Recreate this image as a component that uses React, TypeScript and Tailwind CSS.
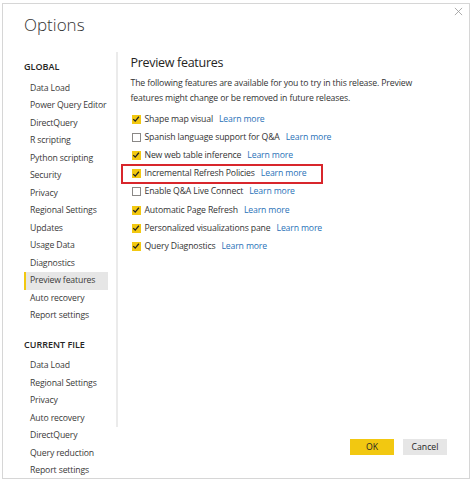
import { useState } from 'react';

type Feature = {
    label: string;
    checked: boolean;
    highlighted?: boolean;
};

const globalItems = [
    'Data Load',
    'Power Query Editor',
    'DirectQuery',
    'R scripting',
    'Python scripting',
    'Security',
    'Privacy',
    'Regional Settings',
    'Updates',
    'Usage Data',
    'Diagnostics',
    'Preview features',
    'Auto recovery',
    'Report settings',
];

const currentFileItems = [
    'Data Load',
    'Regional Settings',
    'Privacy',
    'Auto recovery',
    'DirectQuery',
    'Query reduction',
    'Report settings',
];

const initialFeatures: Feature[] = [
    { label: 'Shape map visual', checked: true },
    { label: 'Spanish language support for Q&A', checked: false },
    { label: 'New web table inference', checked: true },
    { label: 'Incremental Refresh Policies', checked: true, highlighted: true },
    { label: 'Enable Q&A Live Connect', checked: false },
    { label: 'Automatic Page Refresh', checked: true },
    { label: 'Personalized visualizations pane', checked: true },
    { label: 'Query Diagnostics', checked: true },
];

function Checkbox({ checked, onClick }: { checked: boolean; onClick: () => void }) {
    if (checked) {
        return (
            <button onClick={onClick} className="w-[9px] h-[9px] bg-[#f2c811] flex items-center justify-center shrink-0">
                <svg viewBox="0 0 10 10" className="w-[8px] h-[8px]" fill="none">
                    <path d="M1.5 5.2L4 7.6L8.6 2.2" stroke="#252423" strokeWidth={1.6} />
                </svg>
            </button>
        );
    }
    return <button onClick={onClick} className="w-[9px] h-[9px] bg-white border border-[#8a8886] shrink-0" />;
}

export default function App() {
    const [features, setFeatures] = useState(initialFeatures);
    const [selected, setSelected] = useState('global-Preview features');

    const toggle = (index: number) => {
        setFeatures(prev => prev.map((f, i) => (i === index ? { ...f, checked: !f.checked } : f)));
    };

    const renderNavItem = (section: string, item: string) => {
        const key = `${section}-${item}`;
        const isActive = selected === key;
        return (
            <button
                key={key}
                onClick={() => setSelected(key)}
                className={`block w-[84px] h-[17.5px] text-left pl-[4px] leading-[17.5px] whitespace-nowrap border-l-2 ${
                    isActive ? 'bg-[#e6e6e6] border-[#f2c811]' : 'border-transparent'
                }`}
            >
                {item}
            </button>
        );
    };

    return (
        <div className="w-[474px] h-[482px] bg-white pt-[3px] pl-[2px] text-[#333333]" style={{ fontFamily: '"Open Sans", "Noto Sans", sans-serif' }}>
            <div className="w-[468px] h-[476px] border border-[#d6d6d6] flex flex-col">
                {/* Header */}
                <div className="relative h-[48px] shrink-0 pl-[21px] pt-[9px]">
                    <h1 className="text-[17px] font-light leading-[24px] text-[#333333]">Options</h1>
                    <button className="absolute top-[3px] right-[6px] text-[#999999]" aria-label="Close">
                        <svg viewBox="0 0 10 10" className="w-[9px] h-[9px]" fill="none" stroke="currentColor" strokeWidth={0.9}>
                            <path d="M1 1L9 9M9 1L1 9" />
                        </svg>
                    </button>
                </div>

                <div className="flex flex-1">
                    {/* Sidebar */}
                    <div className="w-[113px] shrink-0 pl-[21px] pt-[1.5px] text-[8.7px] tracking-[-0.15px] text-[#3b3a39]">
                        <div className="h-[26px] pt-[7px] text-[9px] font-semibold leading-[12px] text-[#252423] tracking-normal">GLOBAL</div>
                        <div>{globalItems.map(item => renderNavItem('global', item))}</div>
                        <div className="h-[32.5px] pt-[14px] text-[9px] font-semibold leading-[12px] text-[#252423] tracking-normal">CURRENT FILE</div>
                        <div>{currentFileItems.map(item => renderNavItem('file', item))}</div>
                    </div>

                    {/* Main */}
                    <div className="flex-1 flex flex-col">
                        <div className="flex flex-1">
                            <div className="w-[1.5px] bg-[#ebebeb] h-[375px]" />
                            <div className="flex-1 pl-[13px] pt-[1px]">
                                <h2 className="text-[12.5px] leading-[20px] text-[#252423] tracking-[-0.3px]">Preview features</h2>
                                <p className="text-[8.7px] tracking-[-0.15px] leading-[15px] mt-[2.5px] whitespace-nowrap text-[#333333]">
                                    The following features are available for you to try in this release. Preview
                                    <br />
                                    features might change or be removed in future releases.
                                </p>
                                <div className="mt-[4.5px] text-[8.7px] tracking-[-0.15px]">
                                    {features.map((f, i) => (
                                        <div key={f.label} className="relative flex items-center h-[18.2px] pl-[1px] whitespace-nowrap">
                                            <Checkbox checked={f.checked} onClick={() => toggle(i)} />
                                            <span className="ml-[4px] text-[#333333]">{f.label}</span>
                                            <a className="ml-[6px] text-[#2a72b8]" href="#" onClick={e => e.preventDefault()}>
                                                Learn more
                                            </a>
                                            {f.highlighted && (
                                                <div className="absolute left-[-10px] w-[202px] top-[-1px] h-[20px] border-2 border-[#d8262c] pointer-events-none" />
                                            )}
                                        </div>
                                    ))}
                                </div>
                            </div>
                        </div>

                        {/* Footer */}
                        <div className="flex justify-end gap-[9px] pr-[22px] pb-[25px] text-[8.7px]">
                            <button className="w-[44px] h-[16px] bg-[#f2c811] text-[#252423] leading-[16px]">OK</button>
                            <button className="w-[44px] h-[16px] bg-[#e6e6e6] text-[#252423] leading-[16px]">Cancel</button>
                        </div>
                    </div>
                </div>
            </div>
        </div>
    );
}
